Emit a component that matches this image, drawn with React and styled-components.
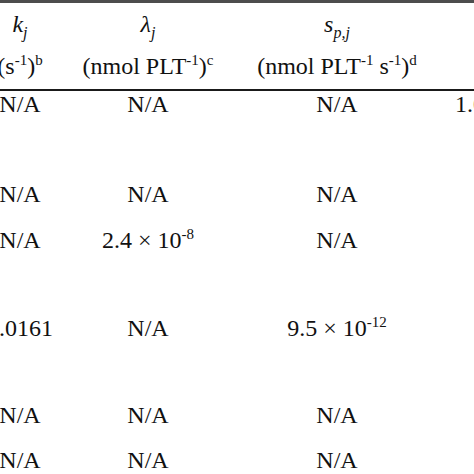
import * as React from 'react'
import styled, { createGlobalStyle } from 'styled-components'

const GlobalStyle = createGlobalStyle`
	html, body {
		margin: 0;
		padding: 0;
		background: #fff;
		overflow: hidden;
	}
	body {
		font-family: "Liberation Serif", "Times New Roman", serif;
		color: #111;
	}
`

const Page = styled.div`
	width: 474px;
	height: 474px;
	overflow: hidden;
`

const Table = styled.div`
	margin-left: -60px;
	width: 584px;
	border-top: 3px solid #4d4d4d;
`

const Row = styled.div`
	display: grid;
	grid-template-columns: 160px 96px 282px 46px;
	height: ${({ $height }) => $height}px;
	${({ $head }) => $head && `border-bottom: 2px solid #1a1a1a;`}
`

const Cell = styled.div`
	display: flex;
	justify-content: center;
	white-space: nowrap;
	font-size: 24px;
	line-height: 26px;
	min-width: 0;
`

const HeadCell = styled.div`
	display: flex;
	flex-direction: column;
	align-items: center;
	white-space: nowrap;
	font-size: 24px;
	padding-top: 3px;
	min-width: 0;
`

const Symbol = styled.div`
	font-style: italic;
	line-height: 36px;
	height: 36px;
`

const Unit = styled.div`
	line-height: 48px;
`

const Sub = styled.sub`
	font-size: 16px;
	font-style: italic;
	vertical-align: -6px;
	line-height: 0;
`

const Sup = styled.sup`
	font-size: 15px;
	vertical-align: 9px;
	line-height: 0;
`

const Sci = ({ m, e }) => (
	<span>
		{m} × 10<Sup>{e}</Sup>
	</span>
)

const rows = [
	{ h: 90, c: ['N/A', 'N/A', 'N/A', <Sci key="s" m="1.0" e="-7" />] },
	{ h: 46, c: ['N/A', 'N/A', 'N/A', ''] },
	{ h: 88, c: ['N/A', <Sci key="s" m="2.4" e="-8" />, 'N/A', ''] },
	{ h: 87, c: ['0.0161', 'N/A', <Sci key="s" m="9.5" e="-12" />, ''] },
	{ h: 45, c: ['N/A', 'N/A', 'N/A', ''] },
	{ h: 45, c: ['N/A', 'N/A', 'N/A', ''] },
]

const App = () => (
	<Page>
		<GlobalStyle />
		<Table>
			<Row $head $height={86}>
				<HeadCell>
					<Symbol>
						k<Sub>j</Sub>
					</Symbol>
					<Unit>
						(s<Sup>-1</Sup>)<Sup>b</Sup>
					</Unit>
				</HeadCell>
				<HeadCell>
					<Symbol>
						λ<Sub>j</Sub>
					</Symbol>
					<Unit>
						(nmol PLT<Sup>-1</Sup>)<Sup>c</Sup>
					</Unit>
				</HeadCell>
				<HeadCell>
					<Symbol>
						s<Sub>p,j</Sub>
					</Symbol>
					<Unit>
						(nmol PLT<Sup>-1</Sup> s<Sup>-1</Sup>)<Sup>d</Sup>
					</Unit>
				</HeadCell>
				<HeadCell />
			</Row>
			{rows.map((r, i) => (
				<Row key={i} $height={r.h}>
					{r.c.map((c, j) => (
						<Cell key={j}>{c}</Cell>
					))}
				</Row>
			))}
		</Table>
	</Page>
)

export default App
